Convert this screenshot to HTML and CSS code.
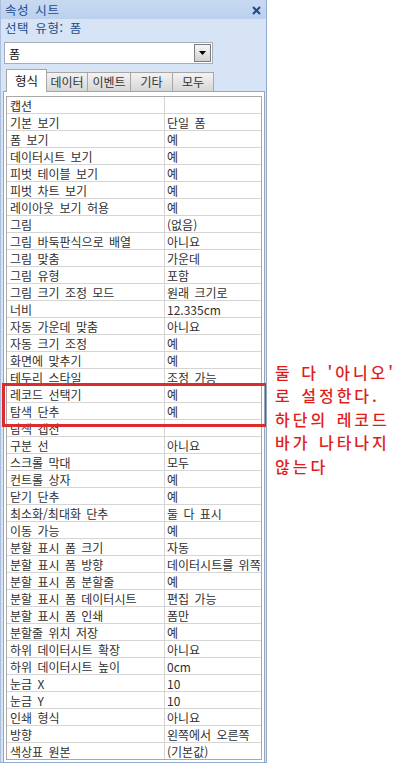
FILE: index.html
```html
<!DOCTYPE html>
<html lang="ko">
<head>
<meta charset="utf-8">
<title>속성 시트</title>
<link rel="stylesheet" href="styles.css">
</head>
<body>
<div class="page">
  <div class="panel">
    <div class="titlebar">
      <span class="title">속성 시트</span>
      <svg class="close" width="9" height="9" viewBox="0 0 9 9"><path d="M1 1L8 8M8 1L1 8" stroke="#1d4b8c" stroke-width="2" fill="none"/></svg>
    </div>
    <div class="seltype">선택 유형: 폼</div>
    <div class="combo">
      <span class="combo-text">폼</span>
      <span class="combo-btn"><svg width="7" height="4" viewBox="0 0 7 4"><path d="M0 0H7L3.5 4Z" fill="#000"/></svg></span>
    </div>
    <div class="tabs">
      <div class="tab active">형식</div>
      <div class="tab">데이터</div>
      <div class="tab">이벤트</div>
      <div class="tab">기타</div>
      <div class="tab">모두</div>
    </div>
    <div class="content">
      <div class="grid">
        <div class="row"><div class="k">캡션</div><div class="v"></div></div>
        <div class="row"><div class="k">기본 보기</div><div class="v">단일 폼</div></div>
        <div class="row"><div class="k">폼 보기</div><div class="v">예</div></div>
        <div class="row"><div class="k">데이터시트 보기</div><div class="v">예</div></div>
        <div class="row"><div class="k">피벗 테이블 보기</div><div class="v">예</div></div>
        <div class="row"><div class="k">피벗 차트 보기</div><div class="v">예</div></div>
        <div class="row"><div class="k">레이아웃 보기 허용</div><div class="v">예</div></div>
        <div class="row"><div class="k">그림</div><div class="v">(없음)</div></div>
        <div class="row"><div class="k">그림 바둑판식으로 배열</div><div class="v">아니요</div></div>
        <div class="row"><div class="k">그림 맞춤</div><div class="v">가운데</div></div>
        <div class="row"><div class="k">그림 유형</div><div class="v">포함</div></div>
        <div class="row"><div class="k">그림 크기 조정 모드</div><div class="v">원래 크기로</div></div>
        <div class="row"><div class="k">너비</div><div class="v">12.335cm</div></div>
        <div class="row"><div class="k">자동 가운데 맞춤</div><div class="v">아니요</div></div>
        <div class="row"><div class="k">자동 크기 조정</div><div class="v">예</div></div>
        <div class="row"><div class="k">화면에 맞추기</div><div class="v">예</div></div>
        <div class="row"><div class="k">테두리 스타일</div><div class="v">조정 가능</div></div>
        <div class="row"><div class="k">레코드 선택기</div><div class="v">예</div></div>
        <div class="row"><div class="k">탐색 단추</div><div class="v">예</div></div>
        <div class="row"><div class="k">탐색 캡션</div><div class="v"></div></div>
        <div class="row"><div class="k">구분 선</div><div class="v">아니요</div></div>
        <div class="row"><div class="k">스크롤 막대</div><div class="v">모두</div></div>
        <div class="row"><div class="k">컨트롤 상자</div><div class="v">예</div></div>
        <div class="row"><div class="k">닫기 단추</div><div class="v">예</div></div>
        <div class="row"><div class="k">최소화/최대화 단추</div><div class="v">둘 다 표시</div></div>
        <div class="row"><div class="k">이동 가능</div><div class="v">예</div></div>
        <div class="row"><div class="k">분할 표시 폼 크기</div><div class="v">자동</div></div>
        <div class="row"><div class="k">분할 표시 폼 방향</div><div class="v">데이터시트를 위쪽</div></div>
        <div class="row"><div class="k">분할 표시 폼 분할줄</div><div class="v">예</div></div>
        <div class="row"><div class="k">분할 표시 폼 데이터시트</div><div class="v">편집 가능</div></div>
        <div class="row"><div class="k">분할 표시 폼 인쇄</div><div class="v">폼만</div></div>
        <div class="row"><div class="k">분할줄 위치 저장</div><div class="v">예</div></div>
        <div class="row"><div class="k">하위 데이터시트 확장</div><div class="v">아니요</div></div>
        <div class="row"><div class="k">하위 데이터시트 높이</div><div class="v">0cm</div></div>
        <div class="row"><div class="k">눈금 X</div><div class="v">10</div></div>
        <div class="row"><div class="k">눈금 Y</div><div class="v">10</div></div>
        <div class="row"><div class="k">인쇄 형식</div><div class="v">아니요</div></div>
        <div class="row"><div class="k">방향</div><div class="v">왼쪽에서 오른쪽</div></div>
        <div class="row"><div class="k">색상표 원본</div><div class="v">(기본값)</div></div>
      </div>
    </div>
    <div class="highlight"></div>
  </div>
  <div class="note">둘 다 '아니오'<br>로 설정한다.<br>하단의 레코드<br>바가 나타나지<br>않는다</div>
</div>
</body>
</html>
```
FILE: styles.css
```css
html, body {
  margin: 0;
  padding: 0;
  background: #ffffff;
}
body {
  font-family: "Noto Sans CJK KR", "Noto Sans", sans-serif;
  font-size: 12px;
  color: #222;
}
.page {
  display: flex;
  width: 417px;
  height: 763px;
  overflow: hidden;
}
.panel {
  position: relative;
  width: 267px;
  height: 763px;
  box-sizing: border-box;
  background: #d6e4f6;
  border-left: 1px solid #a9bfdd;
  border-right: 1px solid #90aad0;
  border-bottom: 1px solid #90aad0;
  flex: none;
  overflow: hidden;
}
.titlebar {
  height: 19px;
  background: linear-gradient(#c8daf1, #bad0ed);
  display: flex;
  align-items: center;
  justify-content: space-between;
  padding: 0 5px 0 4px;
  color: #1d4b8c;
  font-size: 12.5px;
}
.title {
  letter-spacing: 0.6px;
  word-spacing: 2px;
  line-height: 19px;
}
.close {
  display: block;
  margin-top: 2px;
}
.seltype {
  height: 18px;
  line-height: 18px;
  padding-left: 4px;
  color: #1d4b8c;
  font-size: 12.5px;
  letter-spacing: 0.6px;
  word-spacing: 2px;
}
.combo {
  margin: 5px 0 0 3px;
  width: 209px;
  height: 22px;
  box-sizing: border-box;
  border: 1px solid #a3afbf;
  background: #fff;
  display: flex;
  align-items: center;
  justify-content: space-between;
  padding: 0 1px 0 4px;
}
.combo-text {
  font-size: 12px;
  color: #111;
}
.combo-btn {
  width: 17px;
  height: 18px;
  box-sizing: border-box;
  border: 1px solid #7d7d7d;
  background: linear-gradient(#f6f6f6, #d2d2d2);
  display: flex;
  align-items: center;
  justify-content: center;
}
.combo-btn svg {
  display: block;
}
.tabs {
  margin-top: 5px;
  height: 22px;
  display: flex;
  align-items: flex-end;
  padding-left: 5px;
}
.tab {
  height: 19px;
  box-sizing: border-box;
  border: 1px solid #a7a7a7;
  border-bottom: none;
  border-left: none;
  background: linear-gradient(#f3f3f3, #d6d6d6);
  display: flex;
  align-items: center;
  justify-content: center;
  font-size: 12px;
  color: #333;
  width: 41px;
  line-height: 1;
}
.tab:nth-child(3) { width: 43px; }
.tab:nth-child(4) { width: 42px; }
.tab.active {
  width: 41px;
  background: #fff;
  border-left: 1px solid #a7a7a7;
  color: #111;
  font-size: 12.5px;
  position: relative;
  z-index: 1;
  margin-bottom: -1px;
  height: 23px;
}
.content {
  margin-left: 2px;
  width: 262px;
  height: 673px;
  box-sizing: border-box;
  background: #fff;
  border: 1px solid #9aa6b8;
  padding: 4px 0 0 2px;
}
.grid {
  width: 256px;
  border: 1px solid #a9a9a9;
  box-sizing: border-box;
}
.row {
  display: grid;
  grid-template-columns: 158px 1fr;
  height: 17px;
  box-sizing: border-box;
  border-bottom: 1px solid #d5d5d5;
}
.row:last-child {
  border-bottom: none;
  height: 16px;
}
.k, .v {
  line-height: 16px;
  padding-top: 1px;
  height: 16px;
  box-sizing: border-box;
  white-space: nowrap;
  overflow: hidden;
  font-size: 12px;
  color: #303030;
  word-spacing: 2px;
}
.k {
  padding-left: 3px;
  border-right: 1px solid #d5d5d5;
}
.v {
  padding-left: 2px;
}
.highlight {
  position: absolute;
  left: 1px;
  top: 383px;
  width: 266px;
  height: 44px;
  box-sizing: border-box;
  border: 3px solid #dd2a2c;
  z-index: 5;
}
.note {
  margin-left: 8px;
  padding-top: 361px;
  color: #e11d1b;
  font-size: 16px;
  font-weight: 500;
  line-height: 23.4px;
  letter-spacing: 3px;
  word-spacing: 1px;
  white-space: nowrap;
}
```
